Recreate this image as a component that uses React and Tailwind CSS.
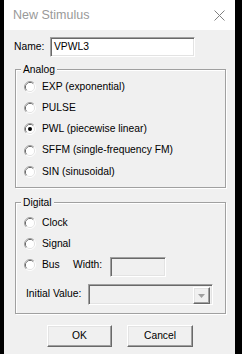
import React from "react";

const sunken =
  "border border-t-[#a0a0a0] border-l-[#a0a0a0] border-r-white border-b-white shadow-[inset_1px_1px_0_#696969,inset_-1px_-1px_0_#e3e3e3]";
const raised =
  "border border-t-white border-l-white border-r-[#696969] border-b-[#696969] shadow-[inset_-1px_-1px_0_#a0a0a0,inset_1px_1px_0_#e3e3e3]";

function Radio({ checked }) {
  return (
    <svg width="12" height="12" viewBox="0 0 12 12" className="shrink-0">
      <path d="M2.11 9.89 A5.5 5.5 0 0 1 9.89 2.11" fill="none" stroke="#a0a0a0" />
      <path d="M9.89 2.11 A5.5 5.5 0 0 1 2.11 9.89" fill="none" stroke="#ffffff" />
      <path d="M2.82 9.18 A4.5 4.5 0 0 1 9.18 2.82" fill="none" stroke="#696969" />
      <path d="M9.18 2.82 A4.5 4.5 0 0 1 2.82 9.18" fill="none" stroke="#e3e3e3" />
      <circle cx="6" cy="6" r="4" fill="#ffffff" />
      {checked && <circle cx="6" cy="6" r="2" fill="#000000" />}
    </svg>
  );
}

function RadioRow({ label, checked, h = "h-[21.3px]" }) {
  return (
    <div className={`flex items-center ${h}`}>
      <Radio checked={checked} />
      <span className="ml-[6px]">{label}</span>
    </div>
  );
}

function Group({ title, titleW, height, children, pt }) {
  return (
    <div
      className={`relative ml-[11px] w-[211px] border border-[#a0a0a0] shadow-[inset_1px_1px_0_#fff,1px_1px_0_#fff] ${height} ${pt} pl-[8px]`}
    >
      <span className="absolute left-[5px] top-[-7px] bg-[#f0f0f0] px-[2px] leading-[13px]">
        {title}
      </span>
      {children}
    </div>
  );
}

export default function App() {
  return (
    <div
      className="flex h-[354px] w-[242px] bg-black text-[10.3px] leading-none text-black"
      style={{ fontFamily: '"Liberation Sans", Arial, sans-serif' }}
    >
      <div className="ml-[4px] flex h-full w-[231px] flex-col bg-[#f0f0f0]">
        {/* title bar */}
        <div className="flex h-[30px] shrink-0 items-center justify-between bg-white pl-[9px] pr-[10px]">
          <span className="text-[12.5px] text-[#999999]">New Stimulus</span>
          <svg width="11" height="11" viewBox="0 0 11 11">
            <path d="M0.5 0.5 L10.5 10.5 M10.5 0.5 L0.5 10.5" stroke="#808080" strokeWidth="1" />
          </svg>
        </div>

        {/* name row */}
        <div className="mt-[7px] flex h-[20px] items-center pl-[10px]">
          <span className="w-[36px]">Name:</span>
          <div className={`flex h-[20px] w-[145px] items-center bg-white pl-[3px] ${sunken}`}>
            VPWL3
          </div>
        </div>

        {/* analog */}
        <div className="mt-[12px]">
          <Group title="Analog" height="h-[119px]" pt="pt-[6px]">
            <RadioRow label="EXP (exponential)" />
            <RadioRow label="PULSE" />
            <RadioRow label="PWL (piecewise linear)" checked />
            <RadioRow label="SFFM (single-frequency FM)" />
            <RadioRow label="SIN (sinusoidal)" />
          </Group>
        </div>

        {/* digital */}
        <div className="mt-[14px]">
          <Group title="Digital" height="h-[112px]" pt="pt-[9.5px]">
            <RadioRow label="Clock" h="h-[21px]" />
            <RadioRow label="Signal" h="h-[21px]" />
            <div className="flex h-[21px] items-center">
              <Radio />
              <span className="ml-[6px] w-[31px]">Bus</span>
              <span className="w-[37px]">Width:</span>
              <div className={`mt-[4px] h-[20px] w-[56px] bg-[#f0f0f0] ${sunken}`} />
            </div>
            <div className="mt-[8.5px] flex h-[21px] items-center pl-[2px]">
              <span className="w-[62px]">Initial Value:</span>
              <div className={`flex h-[21px] w-[125px] justify-end bg-[#f0f0f0] p-[2px] ${sunken}`}>
                <div className={`flex h-[17px] w-[17px] items-center justify-center bg-[#f0f0f0] ${raised}`}>
                  <svg width="7" height="4" viewBox="0 0 7 4">
                    <path d="M0 0 H7 L3.5 4 Z" fill="#a0a0a0" />
                  </svg>
                </div>
              </div>
            </div>
          </Group>
        </div>

        {/* buttons */}
        <div className="mt-[11px] flex gap-[15px] pl-[43px]">
          <div className={`flex h-[22px] w-[65px] items-center justify-center bg-[#f0f0f0] ${raised}`}>
            OK
          </div>
          <div className={`flex h-[22px] w-[66px] items-center justify-center bg-[#f0f0f0] ${raised}`}>
            Cancel
          </div>
        </div>
      </div>
    </div>
  );
}
